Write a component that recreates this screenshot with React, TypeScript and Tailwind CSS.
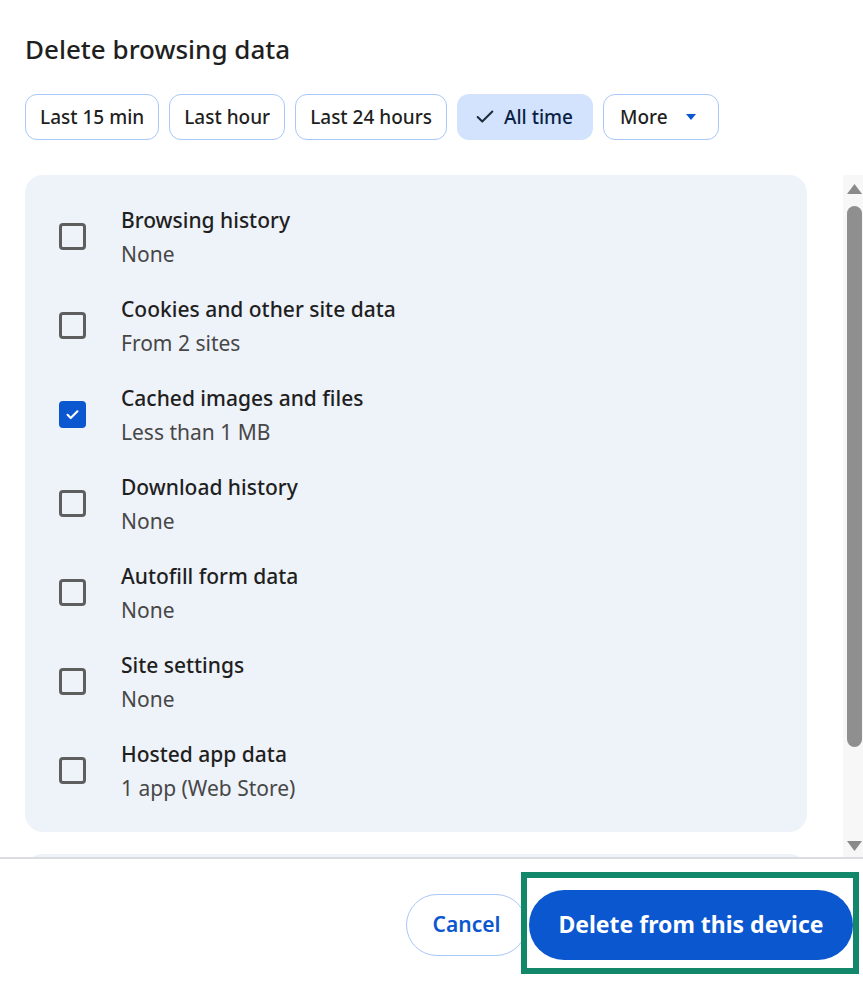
import { Check } from 'lucide-react'

const ranges = ['Last 15 min', 'Last hour', 'Last 24 hours']

const items = [
  { title: 'Browsing history', detail: 'None', checked: false },
  { title: 'Cookies and other site data', detail: 'From 2 sites', checked: false },
  { title: 'Cached images and files', detail: 'Less than 1 MB', checked: true },
  { title: 'Download history', detail: 'None', checked: false },
  { title: 'Autofill form data', detail: 'None', checked: false },
  { title: 'Site settings', detail: 'None', checked: false },
  { title: 'Hosted app data', detail: '1 app (Web Store)', checked: false },
]

const CheckBox = ({ checked }: { checked: boolean }) =>
  checked ? (
    <div className="w-[27px] h-[27px] rounded-[4px] bg-[#0b57d0] flex items-center justify-center flex-shrink-0">
      <svg width="17" height="17" viewBox="0 0 24 24" fill="none" stroke="white" strokeWidth="3" strokeLinecap="round" strokeLinejoin="round">
        <path d="M5 12.5l4.5 4.5L19 7.5" />
      </svg>
    </div>
  ) : (
    <div className="w-[27px] h-[27px] rounded-[4px] border-[3px] border-[#5e5e5e] flex-shrink-0" />
  )

export default function App() {
  return (
    <div
      className="w-[863px] h-[986px] bg-white flex flex-col overflow-hidden text-[#1f1f1f]"
      style={{ fontFamily: '"Segoe UI", "Noto Sans", sans-serif' }}
    >
      {/* Header */}
      <h1 className="px-[25px] pt-[31px] text-[26px] leading-[36px] font-medium">Delete browsing data</h1>

      {/* Time range chips */}
      <div className="flex gap-[10px] px-[25px] mt-[27px]">
        {ranges.map((r) => (
          <button
            key={r}
            className="h-[46px] px-[14px] rounded-[12px] border-[1.5px] border-[#a8c7fa] text-[19px] font-medium"
          >
            {r}
          </button>
        ))}
        <button className="h-[46px] pl-[17px] pr-[20px] rounded-[12px] bg-[#d3e3fd] text-[19px] font-medium text-[#0a1f44] flex items-center gap-[8px]">
          <Check size={22} strokeWidth={2.2} className="text-[#1f2a3c]" />
          All time
        </button>
        <button className="h-[46px] pl-[16px] pr-[22px] rounded-[12px] border-[1.5px] border-[#a8c7fa] text-[19px] font-medium flex items-center gap-[18px]">
          More
          <svg width="10" height="6" viewBox="0 0 10 6">
            <path d="M0 0h10L5 6z" fill="#0b57d0" />
          </svg>
        </button>
      </div>

      {/* Scroll region */}
      <div className="mt-[35px] flex h-[684px] border-b-[2px] border-[#dadce0]">
        <div className="flex-1 pl-[25px] pr-[36px] overflow-hidden">
          <div className="bg-[#eef2f9] rounded-[18px] py-[17px]">
            {items.map((it) => (
              <div key={it.title} className="h-[89px] flex items-center pl-[34px] gap-[35px]">
                <CheckBox checked={it.checked} />
                <div className="flex flex-col">
                  <span className="text-[21px] leading-[34px] font-medium">{it.title}</span>
                  <span className="text-[21px] leading-[34px] text-[#474747]">{it.detail}</span>
                </div>
              </div>
            ))}
          </div>
          <div className="mt-[22px] h-[40px] bg-[#eef2f9] rounded-t-[18px]" />
        </div>

        {/* Scrollbar */}
        <div className="w-[20px] bg-[#f7f7f7] flex flex-col items-start pl-[4px] pt-[9px] pb-[6px]">
          <svg width="15" height="10" viewBox="0 0 15 10">
            <path d="M7.5 0L15 10H0z" fill="#8a8a8a" />
          </svg>
          <div className="mt-[12px] w-[15px] h-[541px] rounded-full bg-[#8f8f8f]" />
          <div className="flex-1" />
          <svg width="15" height="10" viewBox="0 0 15 10">
            <path d="M0 0h15L7.5 10z" fill="#8a8a8a" />
          </svg>
        </div>
      </div>

      {/* Footer */}
      <div className="flex-1 flex items-center justify-end pr-[10px] gap-[2px] pt-[4px]">
        <button className="w-[121px] h-[62px] rounded-full border-[1.5px] border-[#a8c7fa] text-[#0b57d0] text-[21px] font-semibold">
          Cancel
        </button>
        <div className="relative">
          <button className="w-[324px] h-[70px] rounded-full bg-[#0b57d0] text-white text-[23px] font-bold">
            Delete from this device
          </button>
          {/* highlight frame */}
          <div className="absolute -left-[8px] -right-[6px] -top-[18px] -bottom-[14px] border-[6px] border-[#12876a] pointer-events-none" />
        </div>
      </div>
    </div>
  )
}
